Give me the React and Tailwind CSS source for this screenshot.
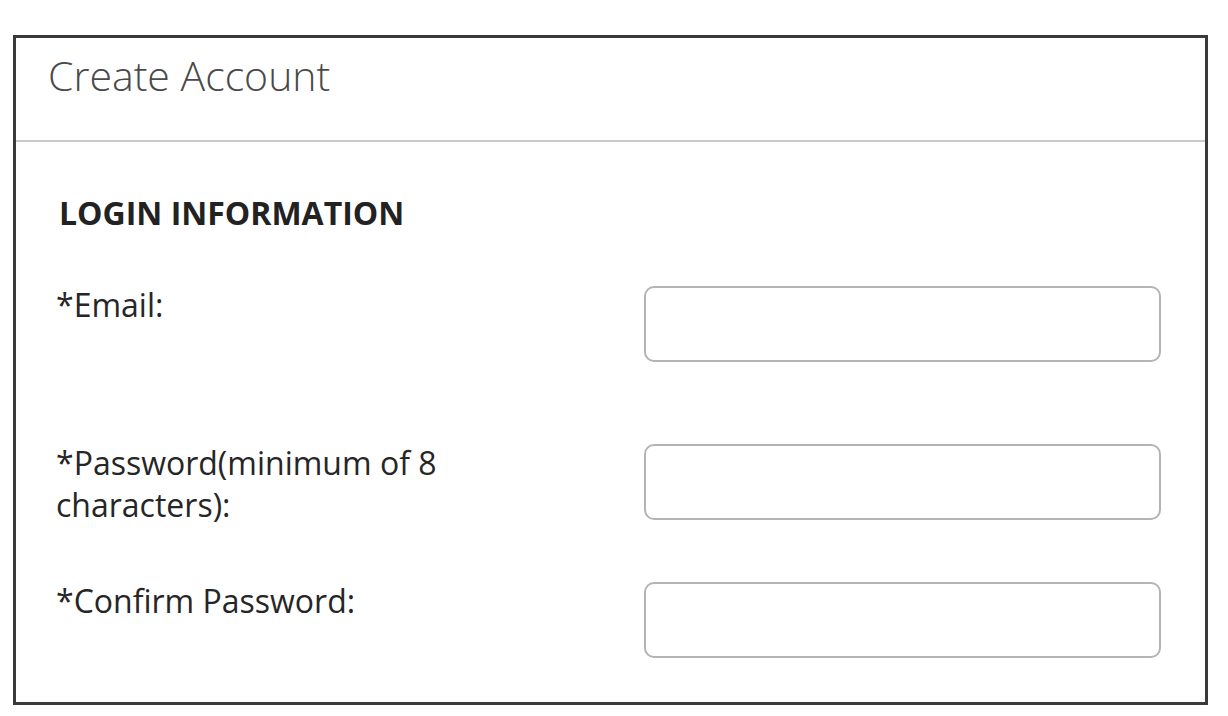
const font = { fontFamily: '"Open Sans", "Noto Sans", sans-serif' }

function Field({ label, className = '' }) {
  return (
    <div className={`flex items-start justify-between ${className}`}>
      <label className="w-[440px] text-[32px] leading-[42px] text-[#262626]">{label}</label>
      <input
        type="text"
        className="w-[517px] h-[76px] mt-[2px] rounded-[10px] border-2 border-[#b4b4b4] bg-white outline-none"
      />
    </div>
  )
}

export default function App() {
  return (
    <div className="min-h-screen bg-white pt-[35px] pl-[13px]" style={font}>
      <div className="w-[1195px] h-[670px] border-[3px] border-[#3a3a3a] bg-white">
        <div className="h-[104px] border-b-2 border-[#cacaca] pl-[32px] pt-[12px]">
          <h1 className="text-[41px] leading-[50px] font-light text-[#4a4a4a]">Create Account</h1>
        </div>
        <div className="pl-[40px] pr-[44px]">
          <h2 className="mt-[52px] pl-[3px] text-[32px] leading-[38px] font-bold text-[#222]">LOGIN INFORMATION</h2>
          <Field className="mt-[52px]" label="*Email:" />
          <Field className="mt-[80px]" label="*Password(minimum of 8 characters):" />
          <Field className="mt-[54px]" label="*Confirm Password:" />
        </div>
      </div>
    </div>
  )
}
